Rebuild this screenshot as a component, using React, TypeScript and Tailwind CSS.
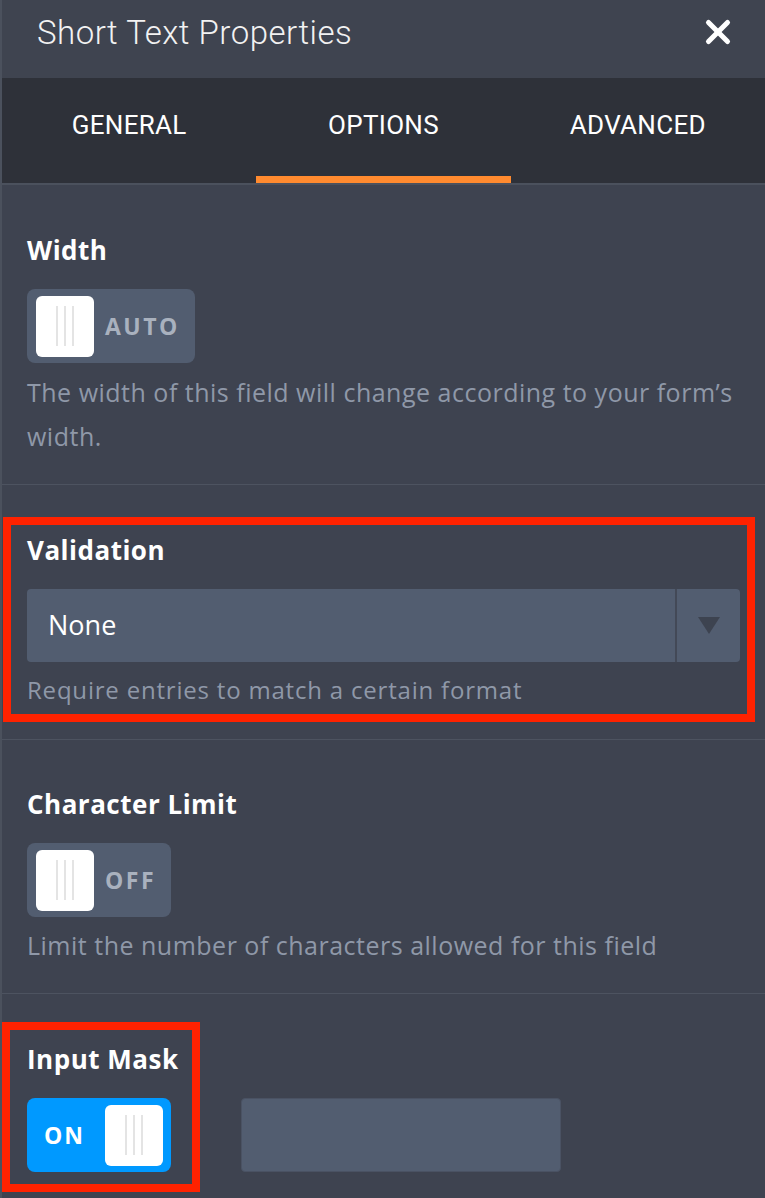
import { X } from 'lucide-react';

const body = { fontFamily: '"Open Sans", Lato, sans-serif' };
const head = { fontFamily: 'Roboto, "Liberation Sans", sans-serif' };

function Knob() {
  return (
    <div className="w-[58px] h-[61px] bg-white rounded-md flex items-center justify-center gap-[6px]">
      <span className="w-[2px] h-[40px] bg-[#e4e4e4]" />
      <span className="w-[2px] h-[40px] bg-[#e4e4e4]" />
      <span className="w-[2px] h-[40px] bg-[#e4e4e4]" />
    </div>
  );
}

function Toggle({ label, on, width }: { label: string; on?: boolean; width: string }) {
  if (on) {
    return (
      <div className={`${width} h-[74px] rounded-lg bg-[#0099ff] flex items-center justify-between pl-[17px] pr-[8px]`}>
        <span className="text-[23px] font-bold tracking-[2px] text-white">{label}</span>
        <Knob />
      </div>
    );
  }
  return (
    <div className={`${width} h-[74px] rounded-lg bg-[#525d70] flex items-center pl-[9px] gap-[11px]`}>
      <Knob />
      <span className="text-[23px] font-bold tracking-[2.5px] text-[#a9b1be]">{label}</span>
    </div>
  );
}

function Tab({ label, active }: { label: string; active?: boolean }) {
  return (
    <div className="flex-1 flex flex-col items-center">
      <div className="flex-1 flex items-center text-[26px] tracking-[0.3px] text-white pb-[3px]">{label}</div>
      <div className={`h-[7px] w-full ${active ? 'bg-[#ff8a2f]' : ''}`} />
    </div>
  );
}

const heading = 'text-[26px] font-bold tracking-[0.5px] text-white leading-[30px]';
const desc = 'text-[25px] tracking-[0.5px] leading-[44px] text-[#8f98a8]';

export default function App() {
  return (
    <div className="w-[765px] h-[1198px] overflow-hidden bg-[#3e4350] border-l-2 border-[#4b515d] relative" style={body}>
      {/* header */}
      <div className="h-[78px] bg-[#3f4450] flex items-center justify-between pl-[35px] pr-[28px]" style={head}>
        <h1 className="text-[33px] font-light tracking-[0.5px] text-[#f2f2f2] -mt-[12px]">Short Text Properties</h1>
        <X className="w-[38px] h-[38px] text-white -mt-[14px]" strokeWidth={3.2} />
      </div>

      {/* tabs */}
      <div className="h-[105px] bg-[#2e3139] flex" style={head}>
        <Tab label="GENERAL" />
        <Tab label="OPTIONS" active />
        <Tab label="ADVANCED" />
      </div>
      <div className="h-[2px] bg-[#4b515d]" />

      {/* width */}
      <div className="px-[25px] pt-[50px] pb-[26px] border-b border-[#4d5360]">
        <h2 className={heading}>Width</h2>
        <div className="mt-[24px]">
          <Toggle label="AUTO" width="w-[168px]" />
        </div>
        <p className={`mt-[7px] ${desc}`}>
          The width of this field will change according to your form’s width.
        </p>
      </div>

      {/* validation */}
      <div className="relative px-[25px] pt-[50px] pb-[29px] border-b border-[#4d5360]">
        <h2 className={heading}>Validation</h2>
        <div className="mt-[24px] h-[73px] bg-[#525d70] rounded-sm flex">
          <div className="flex-1 flex items-center pl-[21px] text-[27px] text-white">None</div>
          <div className="w-[2px] bg-[#434957]" />
          <div className="w-[63px] flex items-center justify-center">
            <svg width="22" height="17" viewBox="0 0 22 17">
              <path d="M0 0 H22 L11 17 Z" fill="#3d4350" />
            </svg>
          </div>
        </div>
        <p className="mt-[8px] text-[24px] tracking-[0.8px] leading-[40px] text-[#8f98a8]">Require entries to match a certain format</p>
        <div className="absolute left-[1px] top-[32px] w-[752px] h-[205px] border-[8px] border-[#ff2200] pointer-events-none" />
      </div>

      {/* character limit */}
      <div className="px-[25px] pt-[49px] pb-[26px] border-b border-[#4d5360]">
        <h2 className={heading}>Character Limit</h2>
        <div className="mt-[24px]">
          <Toggle label="OFF" width="w-[144px]" />
        </div>
        <p className={`mt-[6px] ${desc}`}>Limit the number of characters allowed for this field</p>
      </div>

      {/* input mask */}
      <div className="relative px-[25px] pt-[50px]">
        <h2 className={heading}>Input Mask</h2>
        <div className="mt-[24px] flex items-center gap-[70px]">
          <Toggle label="ON" on width="w-[144px]" />
          <div className="w-[320px] h-[74px] bg-[#525d70] rounded-sm border border-[#4a5263]" />
        </div>
        <div className="absolute left-0 top-[28px] w-[198px] h-[170px] border-[8px] border-[#ff2200] pointer-events-none" />
      </div>
    </div>
  );
}
